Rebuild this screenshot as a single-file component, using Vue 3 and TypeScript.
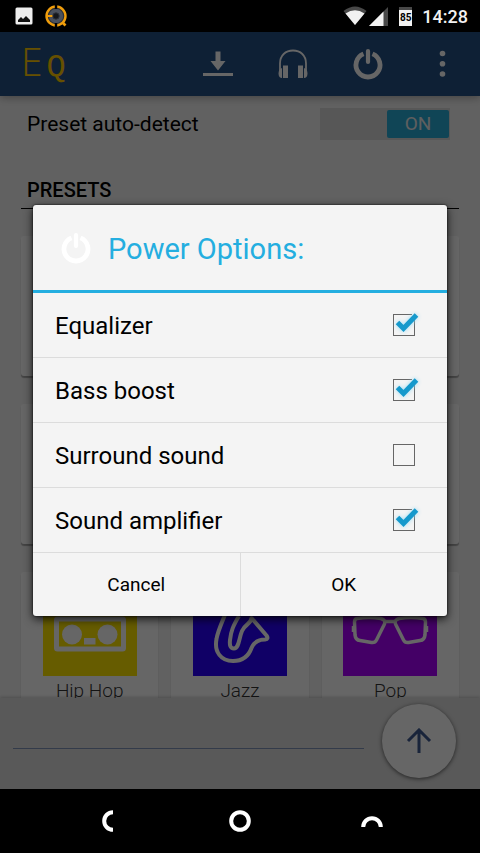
<script setup lang="ts">
import { ref } from 'vue'

interface PowerOption {
  id: string
  label: string
  enabled: boolean
}

const options = ref<PowerOption[]>([
  { id: 'equalizer', label: 'Equalizer', enabled: true },
  { id: 'bass', label: 'Bass boost', enabled: true },
  { id: 'surround', label: 'Surround sound', enabled: false },
  { id: 'amplifier', label: 'Sound amplifier', enabled: true },
])

const autoDetect = ref(true)
const note = ref('')
</script>

<template>
  <div class="phone">
    <div class="status">
      <svg class="picture" viewBox="0 0 18 18"><rect x="0.5" y="0.5" width="17" height="17" rx="1.5" fill="#eee" /><path d="M3 15v-2l3-3 2 2 3-3 4 4v2z" fill="#111" /></svg>
      <svg class="speaker" viewBox="0 0 22 22">
        <path d="M16.500 16.500l4 4" stroke="#ef9d0c" stroke-width="2.600" />
        <circle cx="11" cy="11" r="9.500" fill="#2b2f38" stroke="#ef9d0c" stroke-width="2.400" />
        <circle cx="11" cy="11" r="7.200" fill="#4a505c" />
        <path d="M2 11h6" stroke="#ef9d0c" stroke-width="2" />
        <circle cx="11" cy="11" r="3.200" fill="#15171c" stroke="#2c3038" />
        <path d="M11 0v4M11 18v4" stroke="#000" stroke-width="2.400" />
      </svg>
      <span class="spacer"></span>
      <svg class="wifi" viewBox="0 0 24 20"><path d="M12 19L0.500 5Q12-4 23.500 5z" fill="#484848" /><path d="M12 19L2.500 7.500Q12 1 21.500 7.500z" fill="#f2f2f2" /></svg>
      <svg class="signal" viewBox="0 0 19 19"><path d="M19 0v19H0z" fill="#484848" /><path d="M14.500 4.500V19H0z" fill="#f2f2f2" /></svg>
      <div class="battery">85</div>
      <span class="clock">14:28</span>
    </div>

    <main class="app">
      <header class="bar">
        <h1 class="logo"><span class="logo-e">E</span><span class="logo-q">Q</span></h1>
        <button class="action" aria-label="Save preset">
          <svg viewBox="0 0 32 32"><path d="M13.500 3.500h5v9.500h5L16 22.500 8.500 13h5zM1 25h30v3H1z" fill="#fff" /></svg>
        </button>
        <button class="action" aria-label="Headphones">
          <svg viewBox="0 0 32 32"><path d="M3 23V15.500C3 7.500 8.500 2.500 16 2.500s13 5 13 13V23" fill="none" stroke="#fff" stroke-width="1.800" /><path d="M6 17.500h5V30H6zM21 17.500h5V30h-5zM5 20v10c-2 0-3.500-1.500-3.500-4.500S3 20.500 5 20zM27 20v10c2 0 3.500-1.500 3.500-4.500S29 20.500 27 20z" fill="#fff" /></svg>
        </button>
        <button class="action" aria-label="Power options">
          <svg viewBox="0 0 32 32"><path d="M11.500 5.900a12 12 0 1 0 9 0" fill="none" stroke="#fff" stroke-width="4.800" /><path d="M16 3v11" stroke="#fff" stroke-width="4.200" stroke-linecap="round" /></svg>
        </button>
        <button class="action" aria-label="More">
          <svg viewBox="0 0 32 32"><circle cx="15.500" cy="5.500" r="2.800" fill="#fff" /><circle cx="15.500" cy="15.800" r="2.800" fill="#fff" /><circle cx="15.500" cy="26" r="2.800" fill="#fff" /></svg>
        </button>
      </header>

      <section class="content">
        <div class="detect">
          <span id="detect-label">Preset auto-detect</span>
          <button class="switch" role="switch" aria-labelledby="detect-label" :aria-checked="autoDetect" @click="autoDetect = !autoDetect">
            <span class="knob">ON</span>
          </button>
        </div>
        <h2 class="heading">PRESETS</h2>
        <div class="cards">
          <div v-for="n in 6" :key="n" class="card"></div>
          <button class="card">
            <svg class="tile hiphop" viewBox="0 0 94 94">
              <path d="M28 32.500h38" stroke="#fff" stroke-width="3" stroke-dasharray="4 2" />
              <rect x="13.500" y="37" width="67" height="30" rx="1" fill="none" stroke="#fff" stroke-width="5" />
              <circle cx="29" cy="52.500" r="10" fill="#fff" /><circle cx="64.500" cy="52.500" r="10" fill="#fff" />
              <rect x="41" y="56" width="11.500" height="6.500" fill="#fff" />
            </svg>
            Hip Hop
          </button>
          <button class="card">
            <svg class="tile jazz" viewBox="0 0 94 94">
              <path d="M34 28C30 38 25 48 23.500 57C21 70 28 79 40 79C51 79 56 73 58.500 66C61 60 65 57.500 72 57.500Q76 57 73.500 53.500L58.500 36C58 42 52 42 49 49C46 56 46 66.500 41 66.500C37 66.500 36.500 63 37 58C38 49 40 44 46 34" fill="none" stroke="#fff" stroke-width="4" stroke-linejoin="round" />
            </svg>
            Jazz
          </button>
          <button class="card">
            <svg class="tile pop" viewBox="0 0 94 94">
              <g fill="none" stroke="#fff" stroke-width="3.500" stroke-linejoin="round">
                <path d="M14 36.500Q26 34.500 38 36.500Q43 38 41.500 42L33.500 58Q32 61 28.500 60.500L17 58.500Q12.500 58 12 53L11.500 40Q11.500 37 14 36.500z" />
                <path d="M80 36.500Q68 34.500 56 36.500Q51 38 52.500 42L60.500 58Q62 61 65.500 60.500L77 58.500Q81.500 58 82 53L82.500 40Q82.500 37 80 36.500z" />
                <path d="M41 39.500h12" />
                <path d="M10.500 44v6M83.500 44v6" />
              </g>
            </svg>
            Pop
          </button>
        </div>
      </section>

      <footer class="footer">
        <input v-model="note" class="field" type="text" aria-label="Preset name" />
        <button class="fab" aria-label="Scroll up">
          <svg viewBox="0 0 26 26"><path d="M13 25V2.500M2 13L13 2l11 11" fill="none" stroke="#3f5a92" stroke-width="3" /></svg>
        </button>
      </footer>

      <div class="scrim">
        <form class="dialog" role="dialog" aria-labelledby="dialog-title" @submit.prevent>
          <div class="title">
            <svg class="title-icon" viewBox="0 0 32 32"><path d="M11.500 5.900a12 12 0 1 0 9 0" fill="none" stroke="#fff" stroke-width="4.800" /><path d="M16 3v11" stroke="#fff" stroke-width="4.200" stroke-linecap="round" /></svg>
            <h2 id="dialog-title">Power Options:</h2>
          </div>
          <label v-for="o in options" :key="o.id" class="option" :for="o.id">
            <span>{{ o.label }}</span>
            <span class="check">
              <input :id="o.id" v-model="o.enabled" type="checkbox" />
              <svg v-if="o.enabled" class="tick" viewBox="0 0 30 26">
                <path d="M20 4.500h5v6" fill="none" stroke="#f4f4f4" stroke-width="4" />
                <path class="mark" d="M5.500 12.500l6 6L24.500 5" />
              </svg>
            </span>
          </label>
          <div class="buttons">
            <button type="button">Cancel</button>
            <button type="submit">OK</button>
          </div>
        </form>
      </div>
    </main>

    <nav class="nav">
      <button aria-label="Back"><svg viewBox="0 0 24 24"><path d="M17 3.200a8.800 8.800 0 0 0 0 17.600" /></svg></button>
      <button aria-label="Home"><svg viewBox="0 0 24 24"><circle cx="12" cy="12" r="8.800" /></svg></button>
      <button aria-label="Recent apps"><svg viewBox="0 0 24 24"><path d="M3.200 18a8.800 8.800 0 0 1 17.600 0" /></svg></button>
    </nav>
  </div>
</template>

<style>
body {
  margin: 0;
  background: #000;
}
</style>

<style scoped>
.phone {
  display: flex;
  flex-direction: column;
  height: 100vh;
  font-family: Roboto, "Liberation Sans", sans-serif;
  color: #000;
}
button {
  margin: 0;
  padding: 0;
  border: 0;
  background: none;
  color: inherit;
  font: inherit;
}
h1,
h2 {
  margin: 0;
  font-weight: 400;
}
svg {
  display: block;
}
.status {
  flex: none;
  display: flex;
  align-items: center;
  height: 32px;
  padding: 0 12px 0 15px;
  background: #000;
  color: #f2f2f2;
}
.picture {
  width: 18px;
  height: 18px;
}
.speaker {
  width: 22px;
  height: 22px;
  margin-left: 12px;
}
.spacer {
  flex: 1;
}
.wifi {
  width: 24px;
  height: 20px;
}
.signal {
  width: 19px;
  height: 19px;
  margin-left: 2px;
}
.battery {
  width: 13px;
  height: 16px;
  margin-left: 11px;
  border-top: 3px solid #484848;
  background: #f2f2f2;
  color: #000;
  font-size: 10px;
  font-weight: 700;
  line-height: 15px;
  text-align: center;
}
.clock {
  margin-left: 10px;
  font-size: 18px;
  font-weight: 500;
}
.app {
  position: relative;
  flex: 1;
  min-height: 0;
  display: flex;
  flex-direction: column;
  background: #f3f3f3;
}
.bar {
  flex: none;
  display: flex;
  align-items: center;
  height: 64px;
  padding-left: 21px;
  background: #235085;
  box-shadow: 0 2px 8px rgba(0, 0, 0, 0.3);
}
.logo {
  flex: 1;
  display: flex;
  align-items: baseline;
  gap: 4px;
  color: #ffc800;
  line-height: 60px;
}
.logo-e {
  font-family: "Open Sans", "Noto Sans", sans-serif;
  font-size: 39px;
  font-weight: 300;
}
.logo-q {
  font-family: "Liberation Mono", monospace;
  font-size: 32px;
}
.action {
  width: 75px;
  height: 64px;
  display: flex;
  align-items: center;
  justify-content: center;
}
.action svg {
  width: 32px;
  height: 32px;
}
.content {
  flex: 1;
  min-height: 0;
  overflow: hidden;
  padding: 0 21px;
}
.detect {
  display: flex;
  align-items: center;
  justify-content: space-between;
  padding: 12px 9px 0 6px;
  font-size: 21px;
}
.switch {
  display: flex;
  justify-content: flex-end;
  width: 130px;
  padding: 2px 1px;
  box-sizing: border-box;
  background: #d9d9d9;
}
.knob {
  width: 62px;
  border-radius: 2px;
  background: #2aacd8;
  color: #eee;
  font-size: 19px;
  line-height: 28px;
  text-align: center;
}
.heading {
  margin-top: 38px;
  padding: 0 6px 6px;
  border-bottom: 1px solid #000;
  font-size: 20px;
  font-weight: 500;
  line-height: 24px;
}
.cards {
  display: grid;
  grid-template-columns: repeat(3, 1fr);
  gap: 28px 13px;
  padding-top: 27px;
}
.card {
  display: flex;
  flex-direction: column;
  align-items: center;
  gap: 3px;
  height: 140px;
  padding-top: 10px;
  box-sizing: border-box;
  border-radius: 3px;
  background: #fff;
  box-shadow: 0 2px 1px rgba(0, 0, 0, 0.3);
  color: #333;
  font-size: 19px;
  font-weight: 300;
}
.tile {
  flex: none;
  width: 94px;
  height: 94px;
}
.hiphop {
  background: #ffe600;
}
.jazz {
  background: #2a00ff;
}
.pop {
  background: #aa00ff;
}
.footer {
  flex: none;
  display: flex;
  align-items: flex-start;
  gap: 18px;
  padding: 6px 24px 11px 13px;
  background: #dedede;
  box-shadow: 0 -1px 3px rgba(0, 0, 0, 0.2);
}
.field {
  flex: 1;
  min-width: 0;
  height: 45px;
  box-sizing: border-box;
  padding: 0;
  border: 0;
  border-bottom: 1px solid #7f93b8;
  background: none;
  font: inherit;
  font-size: 21px;
}
.fab {
  display: flex;
  align-items: center;
  justify-content: center;
  width: 74px;
  height: 74px;
  border-radius: 50%;
  background: #fff;
  box-shadow: 0 1px 4px rgba(0, 0, 0, 0.6);
}
.fab svg {
  width: 26px;
  height: 26px;
}
.scrim {
  position: absolute;
  inset: 0;
  display: flex;
  align-items: center;
  justify-content: center;
  padding: 0 33px;
  background: rgba(0, 0, 0, 0.6);
}
.dialog {
  flex: 1;
  border-radius: 3px;
  background: #f4f4f4;
  box-shadow: 0 3px 10px rgba(0, 0, 0, 0.8), 0 0 2px #000;
}
.title {
  display: flex;
  align-items: center;
  gap: 16px;
  height: 85px;
  padding-left: 27px;
  border-bottom: 3px solid #24aee0;
  color: #24aee0;
}
.title h2 {
  padding-top: 2px;
  font-size: 29px;
}
.title-icon {
  width: 32px;
  height: 32px;
}
.option {
  display: flex;
  align-items: center;
  justify-content: space-between;
  height: 64px;
  padding: 0 32px 0 22px;
  border-bottom: 1px solid #dcdcdc;
  font-size: 24px;
}
.option > span:first-child {
  padding-top: 2px;
}
.check {
  position: relative;
  width: 22px;
  height: 22px;
}
.check input {
  appearance: none;
  display: block;
  width: 22px;
  height: 22px;
  margin: 0;
  border: 1px solid #666;
}
.tick {
  position: absolute;
  top: -4px;
  left: -1px;
  width: 30px;
  height: 26px;
  pointer-events: none;
}
.mark {
  fill: none;
  stroke: #1599cc;
  stroke-width: 5;
  filter: drop-shadow(0 0 2px #9adcf5);
}
.buttons {
  display: flex;
  height: 63px;
}
.buttons button {
  flex: 1;
  font-size: 19px;
}
.buttons button + button {
  border-left: 1px solid #dcdcdc;
}
.nav {
  flex: none;
  display: flex;
  height: 64px;
  padding: 0 42px;
  background: #000;
}
.nav button {
  flex: 1;
  display: flex;
  align-items: center;
  justify-content: center;
}
.nav svg {
  width: 24px;
  height: 24px;
  fill: none;
  stroke: #fff;
  stroke-width: 4;
}
</style>
